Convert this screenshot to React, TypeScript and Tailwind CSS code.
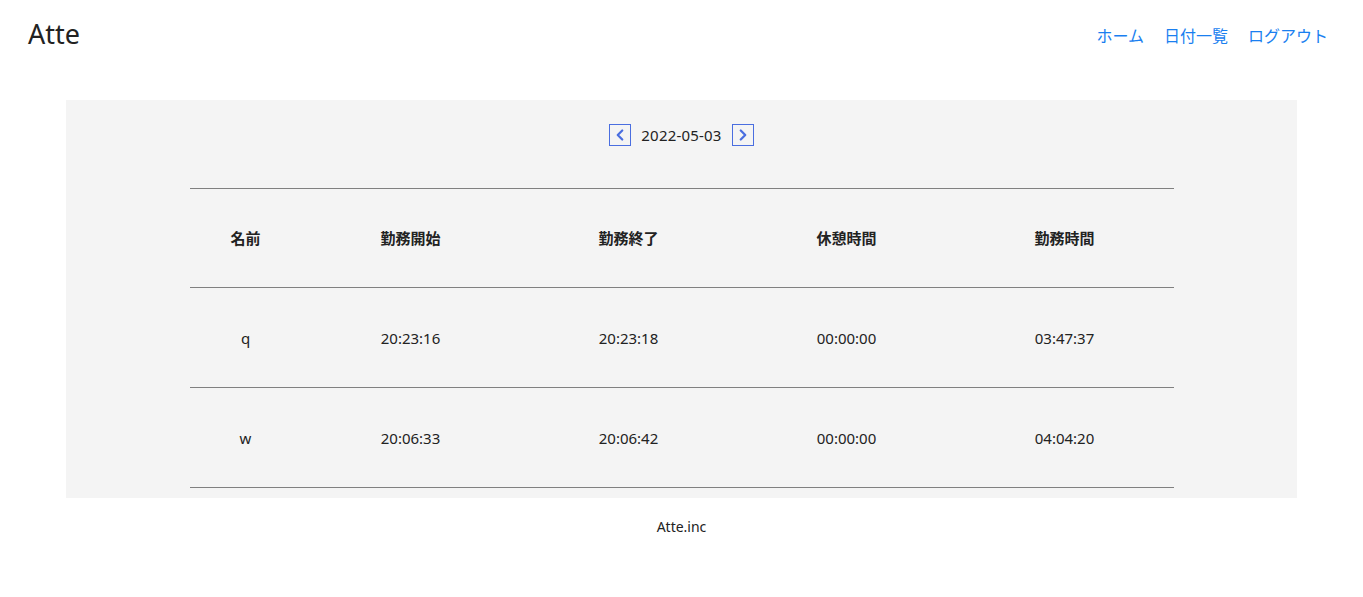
import { ChevronLeft, ChevronRight } from "lucide-react";

const rows = [
  { name: "q", start: "20:23:16", end: "20:23:18", rest: "00:00:00", work: "03:47:37" },
  { name: "w", start: "20:06:33", end: "20:06:42", rest: "00:00:00", work: "04:04:20" },
];

const font = { fontFamily: '"Noto Sans", "Noto Sans CJK JP", sans-serif' };

export default function App() {
  return (
    <div className="min-h-[597px] bg-white text-[#222]" style={font}>
      <header className="flex h-[70px] items-start justify-between pl-[28px] pr-[35px] pt-[14px]">
        <h1 className="text-[27px] leading-[40px] text-[#222]">Atte</h1>
        <nav className="flex gap-[20px] pt-[10px] text-[16px] leading-[24px] text-[#1a7ff0]">
          <a href="#">ホーム</a>
          <a href="#">日付一覧</a>
          <a href="#">ログアウト</a>
        </nav>
      </header>

      <main className="mx-[66px] mt-[30px] bg-[#f4f4f4] pb-[10px] pt-[24px]">
        <div className="flex items-center justify-center gap-[10px]">
          <button className="flex h-[22px] w-[22px] items-center justify-center border border-[#4a6ee0] text-[#4a6ee0]">
            <ChevronLeft className="h-[18px] w-[18px]" strokeWidth={3} />
          </button>
          <span className="text-[15px] leading-[22px] tracking-[0.2px]">2022-05-03</span>
          <button className="flex h-[22px] w-[22px] items-center justify-center border border-[#4a6ee0] text-[#4a6ee0]">
            <ChevronRight className="h-[18px] w-[18px]" strokeWidth={3} />
          </button>
        </div>

        <table className="mx-auto mt-[42px] w-[984px] border-collapse text-center text-[15px]">
          <thead>
            <tr className="h-[99px] border-y border-[#808080]">
              <th className="w-[112px] font-bold">名前</th>
              <th className="w-[218px] font-bold">勤務開始</th>
              <th className="w-[218px] font-bold">勤務終了</th>
              <th className="w-[218px] font-bold">休憩時間</th>
              <th className="w-[218px] font-bold">勤務時間</th>
            </tr>
          </thead>
          <tbody>
            {rows.map((r) => (
              <tr key={r.name} className="h-[100px] border-b border-[#808080] pt-px">
                <td className="pt-[2px]">{r.name}</td>
                <td className="pt-[2px]">{r.start}</td>
                <td className="pt-[2px]">{r.end}</td>
                <td className="pt-[2px]">{r.rest}</td>
                <td className="pt-[2px]">{r.work}</td>
              </tr>
            ))}
          </tbody>
        </table>
      </main>

      <footer className="pt-[18px] text-center text-[14px] leading-[22px]">Atte.inc</footer>
    </div>
  );
}
